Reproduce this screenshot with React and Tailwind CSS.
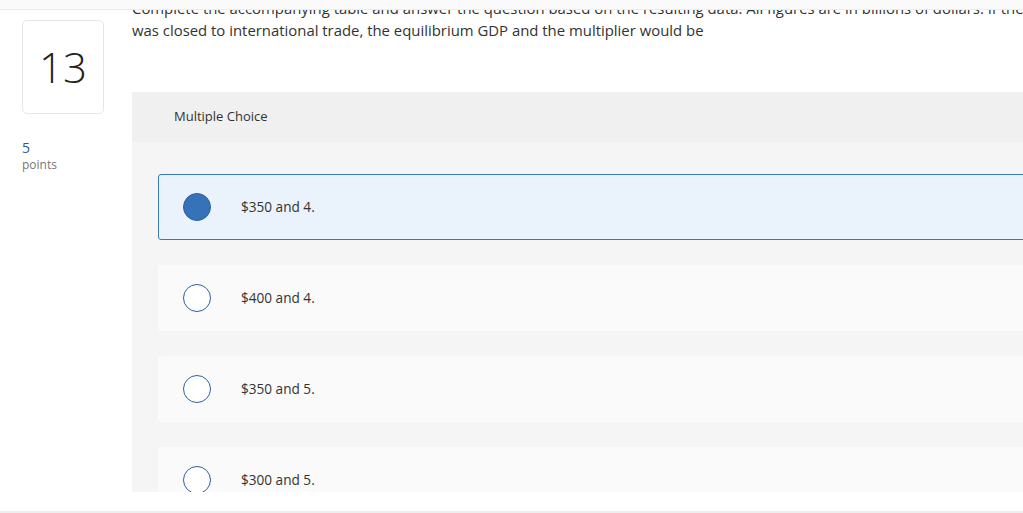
export default function App() {
  const options = [
    { label: "$350 and 4.", selected: true },
    { label: "$400 and 4.", selected: false },
    { label: "$350 and 5.", selected: false },
    { label: "$300 and 5.", selected: false },
  ];
  return (
    <div
      className="w-[1023px] h-[513px] overflow-hidden bg-white flex flex-col text-[#333]"
      style={{ fontFamily: "'Open Sans', Lato, Arial, sans-serif" }}
    >
      <div className="h-[10px] shrink-0 bg-[#fafafa] border-b border-[#ececec]" />
      <div className="h-[482px] shrink-0 overflow-hidden flex">
        <div className="w-[132px] shrink-0 pl-[22px] pt-[10px]">
          <div className="w-[82px] h-[94px] border border-[#e6e6e6] rounded-[5px] flex items-center justify-center">
            <span className="text-[42px] leading-none text-[#222] font-light">13</span>
          </div>
          <div className="mt-[25px] text-[14px] leading-[18px] text-[#1f5a9c]">5</div>
          <div className="text-[12px] leading-[16px] text-[#777]">points</div>
        </div>
        <div className="flex-1 min-w-0">
          <div className="-mt-[13px] w-[1000px] text-[14.9px] leading-[22px] text-[#333]">
            <p className="whitespace-nowrap">
              Complete the accompanying table and answer the question based on the resulting data. All figures are in billions of dollars. If the
            </p>
            <p>was closed to international trade, the equilibrium GDP and the multiplier would be</p>
          </div>
          <div className="mt-[51px] w-[1000px]">
            <div className="h-[50px] bg-[#f0f0f0] flex items-center pl-[42px] text-[13px] text-[#333]">
              Multiple Choice
            </div>
            <div className="bg-[#f5f5f5] pl-[26px] pt-[32px] pb-[26px] flex flex-col gap-[25px]">
              {options.map((o) => (
                <div
                  key={o.label}
                  className={
                    o.selected
                      ? "h-[66px] rounded-[3px] border border-[#3a78be] bg-[#eaf2fb] flex items-center pl-[24px]"
                      : "h-[66px] rounded-[3px] border border-transparent bg-[#fafafa] flex items-center pl-[24px]"
                  }
                >
                  <div
                    className={
                      o.selected
                        ? "w-[28px] h-[28px] rounded-full border border-[#2c609f] bg-[#3672b8] shrink-0"
                        : "w-[28px] h-[28px] rounded-full border-[1.5px] border-[#2c609f] bg-white shrink-0"
                    }
                  />
                  <span className="ml-[30px] text-[13.6px] text-[#333]">{o.label}</span>
                </div>
              ))}
            </div>
          </div>
        </div>
      </div>
      <div className="flex-1 bg-white border-b-2 border-[#eeeeee]" />
    </div>
  );
}
